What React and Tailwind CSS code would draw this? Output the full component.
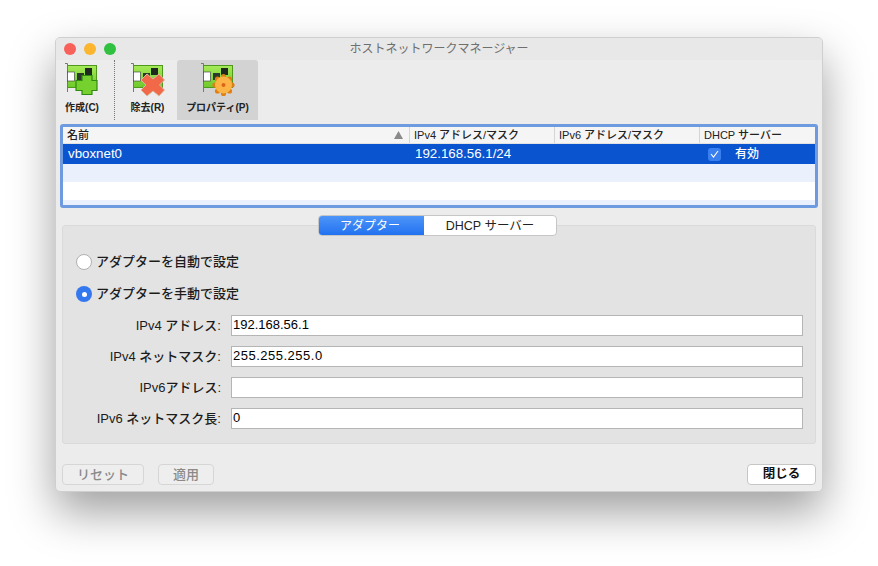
import React from 'react';

function Card({ children }) {
  return (
    <svg width="36" height="36" viewBox="0 0 36 36">
      <defs>
        <linearGradient id="cardFill" x1="0" y1="0" x2="0" y2="1">
          <stop offset="0" stopColor="#a6ea58" />
          <stop offset="1" stopColor="#6ec92c" />
        </linearGradient>
      </defs>
      <path d="M1 1.5h2.5V30" fill="none" stroke="#6f7f66" strokeWidth="1" />
      <rect x="3.5" y="3.5" width="29" height="22" fill="url(#cardFill)" stroke="#4f9a1d" />
      <rect x="3.5" y="10" width="7" height="9" fill="#fff" stroke="#333" strokeWidth="0.6" />
      <rect x="13" y="11" width="7" height="7" fill="#2c3a2a" />
      <rect x="21" y="6" width="7" height="7" fill="#1f2a1f" />
      {children}
    </svg>
  );
}

function ToolButton({ label, active, children }) {
  return (
    <div className={`flex flex-col items-center h-[60px] pt-[2px] rounded-t-[3px] ${active ? 'w-[81px] bg-[#d3d3d3]' : ''}`}>
      <Card>{children}</Card>
      <span className="mt-[3px] text-[10px] leading-[14px] font-semibold text-[#222] whitespace-nowrap">{label}</span>
    </div>
  );
}

function Field({ label, value, valueClass }) {
  return (
    <div className="flex items-center h-[21px]">
      <label className="w-[158px] text-right text-[13px] font-medium text-[#1c1c1c] whitespace-nowrap">{label}</label>
      <div className={`ml-[10px] w-[572px] h-[21px] bg-white border border-[#b5b5b5] px-[1px] text-[13px] leading-[18px] text-black ${valueClass || ''}`}>
        {value}
      </div>
    </div>
  );
}

function Radio({ checked, label }) {
  return (
    <div className="flex items-center h-[16px]">
      {checked ? (
        <span className="w-[16px] h-[16px] rounded-full bg-[#3478f0] flex items-center justify-center">
          <span className="w-[5px] h-[5px] rounded-full bg-white" />
        </span>
      ) : (
        <span className="w-[16px] h-[16px] rounded-full bg-white border border-[#b0b0b0]" />
      )}
      <span className="ml-[4px] text-[13px] font-medium text-[#1c1c1c]">{label}</span>
    </div>
  );
}

export default function App() {
  return (
    <div className="w-[878px] h-[566px] bg-white pt-[37px] pl-[55px] overflow-hidden font-['Liberation_Sans','Noto_Sans_CJK_JP',sans-serif]">
      <div className="w-[768px] h-[455px] bg-[#ececec] rounded-[5px] border border-[#cfcfcf] shadow-[0_20px_45px_rgba(0,0,0,0.38)] flex flex-col overflow-hidden">
        {/* title bar */}
        <div className="relative h-[22px] flex items-center pl-[8px] gap-[8px] bg-[#e8e8e8]">
          <span className="w-[12px] h-[12px] rounded-full bg-[#f8605a]" />
          <span className="w-[12px] h-[12px] rounded-full bg-[#fbb52e]" />
          <span className="w-[12px] h-[12px] rounded-full bg-[#2fc13f]" />
          <span className="absolute inset-x-0 text-center text-[12px] text-[#6f6f6f]">ホストネットワークマネージャー</span>
        </div>

        {/* toolbar */}
        <div className="h-[60px] flex items-start">
          <div className="w-[52px] mr-[6px] flex justify-center">
            <ToolButton label="作成(C)">
              <path d="M18 13.5h10v5h5v10h-5v4H18v-4h-6v-10h6z" fill="#76d02e" stroke="#2f8a12" strokeWidth="1.2" />
            </ToolButton>
          </div>
          <div className="h-[60px] border-l border-dotted border-[#777]" />
          <div className="w-[62px] pl-[3px] flex justify-center">
            <ToolButton label="除去(R)">
              <path d="M11 18l6-6 6 5 6-5 5.5 6-5 5 5 5-5.5 6-6-5-6 5-6-6 5-5z" fill="#f2694a" stroke="#d9b9a0" strokeWidth="1" />
            </ToolButton>
          </div>
          <ToolButton label="プロパティ(P)" active>
            <g fill="#e07f14">
              <circle cx="23.5" cy="14.5" r="2.6" />
              <circle cx="23.5" cy="31.5" r="2.6" />
              <circle cx="15" cy="23" r="2.6" />
              <circle cx="32" cy="23" r="2.6" />
              <circle cx="17.5" cy="17" r="2.6" />
              <circle cx="29.5" cy="17" r="2.6" />
              <circle cx="17.5" cy="29" r="2.6" />
              <circle cx="29.5" cy="29" r="2.6" />
            </g>
            <circle cx="23.5" cy="23" r="8.5" fill="#fbb445" />
            <circle cx="23.5" cy="23" r="2" fill="#d9651b" />
          </ToolButton>
        </div>

        {/* network list */}
        <div className="mx-[4px] mt-[4px] h-[84px] border-[3px] border-[#6e9ae0] rounded-[3px] bg-white flex flex-col overflow-hidden">
          <div className="h-[17px] flex items-center bg-[#f5f5f5] text-[11px] font-medium text-[#222] border-b border-[#e2e2e2]">
            <div className="w-[347px] pl-[4px] flex items-center justify-between pr-[6px] border-r border-[#d5d5d5]">
              <span>名前</span>
              <svg width="9" height="8" viewBox="0 0 9 8"><path d="M4.5 0L9 8H0z" fill="#8a8a8a" /></svg>
            </div>
            <div className="w-[145px] pl-[4px] border-r border-[#d5d5d5]">IPv4 アドレス/マスク</div>
            <div className="w-[145px] pl-[4px] border-r border-[#d5d5d5]">IPv6 アドレス/マスク</div>
            <div className="pl-[4px]">DHCP サーバー</div>
          </div>
          <div className="h-[20px] flex items-center bg-[#0a55cf] text-white text-[13.3px]">
            <div className="w-[352px] pl-[5px]">vboxnet0</div>
            <div className="w-[293px]">192.168.56.1/24</div>
            <div className="flex items-center">
              <span className="w-[13px] h-[13px] rounded-[3px] bg-[#3a7fef] flex items-center justify-center">
                <svg width="9" height="8" viewBox="0 0 9 8"><path d="M1 4l2.5 3L8 1" fill="none" stroke="#fff" strokeWidth="1.1" /></svg>
              </span>
              <span className="ml-[14px] text-[12px] font-medium">有効</span>
            </div>
          </div>
          <div className="h-[18px] bg-[#ebf1fc]" />
          <div className="h-[18px] bg-white" />
          <div className="flex-1 bg-[#ebf1fc]" />
        </div>

        {/* adapter panel */}
        <div className="relative mx-[6px] mt-[17px] h-[219px] bg-[#e3e3e3] border border-[#dadada] rounded-[3px] pt-[28px] pl-[13px]">
          <div className="absolute -top-[11px] left-[255px] h-[21px] w-[239px] flex rounded-[4px] overflow-hidden border border-[#c6c6c6] bg-white text-[12px] leading-[20px]">
            <div className="w-[106px] -my-px -ml-px pr-[2px] pt-px flex items-center justify-center bg-gradient-to-b from-[#4f97f9] to-[#1f6ff0] text-white">アダプター</div>
            <div className="flex-1 pt-px flex items-center justify-center text-[#222] text-[12.5px]">DHCP サーバー</div>
          </div>
          <div className="flex flex-col gap-[16px]">
            <Radio label="アダプターを自動で設定" />
            <Radio checked label="アダプターを手動で設定" />
          </div>
          <div className="-ml-[13px] mt-[13px] flex flex-col gap-[10px]">
            <Field label="IPv4 アドレス:" value="192.168.56.1" />
            <Field label="IPv4 ネットマスク:" value="255.255.255.0" valueClass="tracking-[0.5px]" />
            <Field label="IPv6アドレス:" value="" />
            <Field label="IPv6 ネットマスク長:" value="0" />
          </div>
        </div>

        {/* footer buttons */}
        <div className="mx-[6px] mt-[20px] flex items-center text-[13px] leading-[17px] font-medium">
          <button className="w-[82px] h-[21px] rounded-[4px] bg-[#eeeeee] border border-[#d6d6d6] text-[#8a8a8a]">リセット</button>
          <button className="ml-[14px] w-[56px] h-[21px] rounded-[4px] bg-[#eeeeee] border border-[#d6d6d6] text-[#8a8a8a]">適用</button>
          <button className="ml-auto w-[69px] h-[21px] rounded-[4px] bg-white border border-[#c6c6c6] text-[12.5px] font-semibold text-[#111]">閉じる</button>
        </div>
      </div>
    </div>
  );
}
